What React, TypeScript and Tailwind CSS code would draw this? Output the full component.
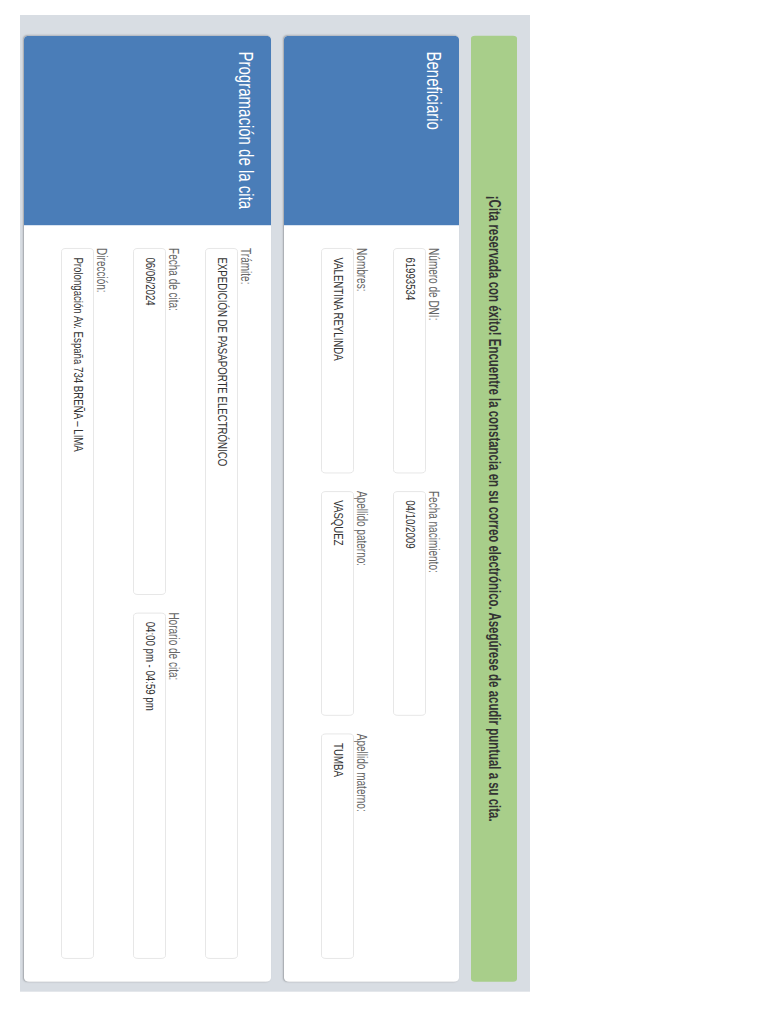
import React from 'react';

const Field: React.FC<{ label: string; value?: string; className?: string }> = ({ label, value, className }) => (
  <div className={`mb-[23px] ${className ?? ''}`}>
    <p className="h-[16px] text-[14px] leading-[16px] text-[#666]">{label}</p>
    <div className="h-[33px] rounded-[5px] border border-[#e3e3e3] bg-white px-3 flex items-center text-[13.5px] text-[#333]">
      {value}
    </div>
  </div>
);

const Card: React.FC<{ title: string; children: React.ReactNode }> = ({ title, children }) => (
  <section className="flex rounded-[5px] overflow-hidden bg-white shadow-[0_1px_2px_rgba(0,0,0,0.25)]">
    <header className="w-[265px] shrink-0 bg-[#4a7db8] px-[22px] pt-[12px]">
      <h2 className="text-[21px] leading-[25px] text-white whitespace-nowrap">{title}</h2>
    </header>
    <div className="flex-1 px-8 pt-[17px] pb-[14px]">{children}</div>
  </section>
);

export default function App() {
  return (
    <div className="min-h-screen bg-white pt-[15px] pl-[20px] font-['Liberation_Sans',Arial,sans-serif]">
      <div className="w-[510px] h-[977px] overflow-hidden">
        {/* the reference page is turned a quarter clockwise and squeezed along its width */}
        <div className="w-[1366px] h-[510px] origin-top-left [transform:translateX(510px)_rotate(90deg)_scaleX(0.715)] bg-[#d8dde3] pt-[13px] pl-[29px] pr-[14px] flex flex-col">
          <div className="h-[46px] rounded-[4px] bg-[#a8ce8a] flex items-center justify-center text-[16px] font-bold text-[#333]">
            ¡Cita reservada con éxito! Encuentre la constancia en su correo electrónico. Asegúrese de acudir puntual a su cita.
          </div>

          <div className="mt-[12px]">
            <Card title="Beneficiario">
              <div className="grid grid-cols-3 gap-x-[25px]">
                <Field label="Número de DNI:" value="61993534" />
                <Field label="Fecha nacimiento:" value="04/10/2009" />
                <div />
                <Field label="Nombres:" value="VALENTINA REYLINDA" />
                <Field label="Apellido paterno:" value="VASQUEZ" />
                <Field label="Apellido materno:" value="TUMBA" />
              </div>
            </Card>
          </div>

          <div className="mt-[13px]">
            <Card title="Programación de la cita">
              <div className="grid grid-cols-2 gap-x-[25px]">
                <Field className="col-span-2" label="Trámite:" value="EXPEDICIÓN DE PASAPORTE ELECTRÓNICO" />
                <Field label="Fecha de cita:" value="06/06/2024" />
                <Field label="Horario de cita:" value="04:00 pm - 04:59 pm" />
                <Field className="col-span-2" label="Dirección:" value="Prolongación Av. España 734 BREÑA – LIMA" />
              </div>
            </Card>
          </div>
        </div>
      </div>
    </div>
  );
}
